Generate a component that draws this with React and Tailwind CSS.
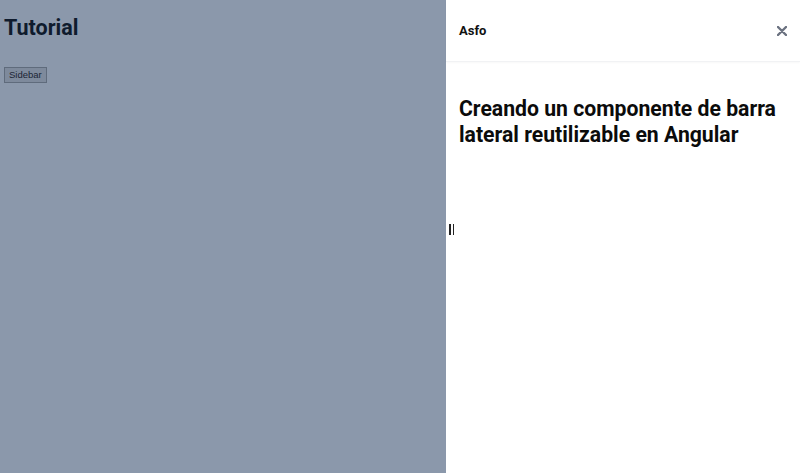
import React from "react";

export default function App() {
  return (
    <div className="relative flex h-[473px] w-full overflow-hidden bg-white" style={{ fontFamily: "Roboto, 'Liberation Sans', sans-serif" }}>
      {/* page content under the dimmed backdrop */}
      <main className="relative flex-1 bg-[#8b98ab]">
        <div className="px-[4px] pt-[14px]">
          <h1 className="text-[21.5px] font-bold leading-[28px] text-[#0f1b2d]">Tutorial</h1>
          <button
            className="mt-[25px] border border-[#5f6b7c] bg-[#7e8a9c] px-[4px] py-[1px] text-[9.5px] leading-[12px] text-[#1b2534]"
            style={{ fontFamily: "'Liberation Sans', Arial, sans-serif" }}
          >
            Sidebar
          </button>
        </div>
      </main>

      {/* sidebar panel */}
      <aside className="relative flex w-[354px] flex-col bg-white">
        <div className="absolute left-[3px] top-[224px] flex gap-[2px]">
          <span className="h-[11px] w-[1.5px] bg-[#222]" />
          <span className="h-[11px] w-[1.5px] bg-[#222]" />
        </div>
        <header className="flex h-[62px] items-center justify-between border-b border-[#f1f2f4] pl-[13px] pr-[11px] shadow-[0_1px_2px_rgba(0,0,0,0.03)]">
          <span className="pt-[1px] text-[13px] font-bold text-[#111]">Asfo</span>
          <button className="flex h-[14px] w-[14px] items-center justify-center text-[#6b7280]">
            <svg width="10" height="10" viewBox="0 0 10 10">
              <path d="M1 1L9 9M9 1L1 9" stroke="currentColor" strokeWidth="2.4" strokeLinecap="round" />
            </svg>
          </button>
        </header>
        <div className="px-[13px] pt-[34px]">
          <h2 className="text-[21.2px] font-bold leading-[26px] text-[#0b0b0b]">
            Creando un componente de barra lateral reutilizable en Angular
          </h2>
        </div>
      </aside>
    </div>
  );
}
